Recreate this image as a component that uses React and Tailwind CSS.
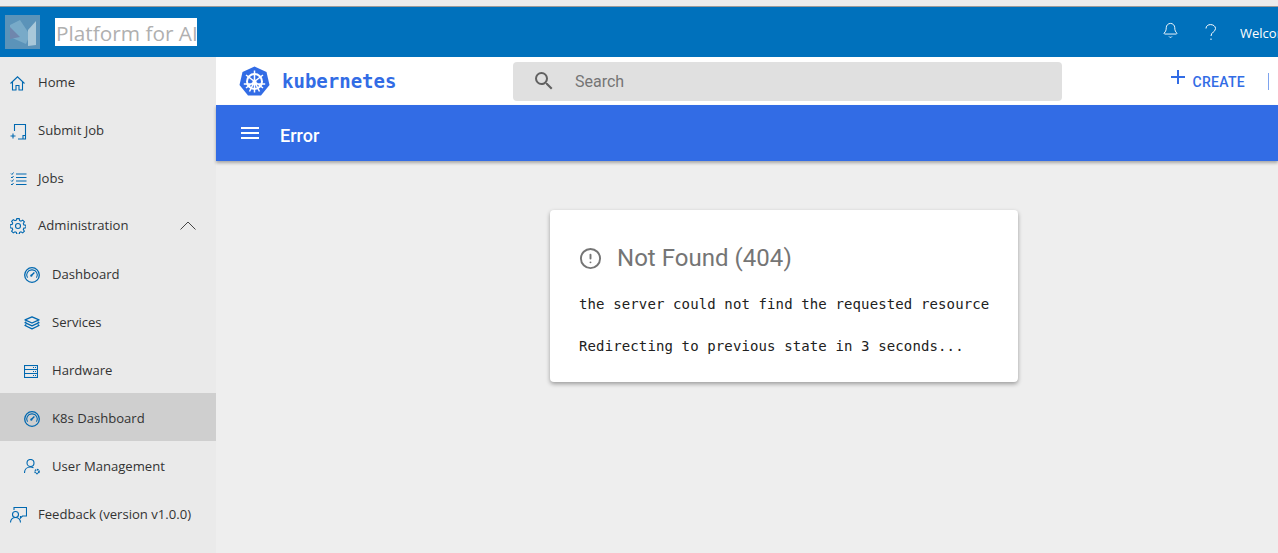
import React from 'react';
import { Bell, AlertCircle } from 'lucide-react';

const GaugeIcon = () => (
  <svg width="16" height="16" viewBox="0 0 16 16" fill="none" stroke="currentColor">
    <circle cx="8" cy="8" r="7.300" strokeWidth="1.300" />
    <path d="M3.500 10.800A5.100 5.100 0 0 1 8 2.900a5.100 5.100 0 0 1 4.500 7.900" strokeWidth="1.100" />
    <path d="M7.400 8.600 10.400 5.600" strokeWidth="1.400" />
    <circle cx="7.300" cy="8.700" r="1.100" fill="currentColor" stroke="none" />
  </svg>
);

const ServicesIcon = () => (
  <svg width="16" height="14" viewBox="0 0 16 14" fill="none" stroke="currentColor" strokeWidth="1.300" strokeLinejoin="round">
    <path d="M8 0.800 15 3.900 8 7 1 3.900Z" />
    <path d="M2.300 5.700 1 6.700 8 9.800 15 6.700 13.700 5.700" />
    <path d="M2.300 8.500 1 9.500 8 12.800 15 9.500 13.700 8.500" />
  </svg>
);

const HomeIcon = () => (
  <svg width="15" height="15" viewBox="0 0 15 15" fill="none" stroke="currentColor" strokeWidth="1.100">
    <path d="M0.500 7.500 7.500 0.800 14.500 7.500" />
    <path d="M2.500 6V14H6V9.500H9V14H12.500V6" />
  </svg>
);

const SubmitIcon = () => (
  <svg width="17" height="17" viewBox="0 0 17 17" fill="none" stroke="currentColor" strokeWidth="1.100">
    <path d="M4.500 8V1.500H15.500V16H8" />
    <path d="M0.500 13H5.500M3 10.500V15.500" />
    <path d="M13 16V12.500h2.500" />
  </svg>
);

const JobsIcon = () => (
  <svg width="17" height="14" viewBox="0 0 17 14" fill="none" stroke="currentColor" strokeWidth="1.200">
    <path d="M6 2H16.500M6 5.500H16.500M6 9H16.500M6 12.500H16.500" />
    <path d="M1 1.500l1 1 1.500-2M1 5l1 1 1.500-2M1 8.500l1 1 1.500-2M1 12l1 1 1.500-2" strokeWidth="1" />
  </svg>
);

const GearIcon = () => (
  <svg width="16" height="16" viewBox="0 0 16 16" fill="none" stroke="currentColor" strokeWidth="1.100">
    <circle cx="8" cy="8" r="2.500" />
    <path d="M6.800 0.600h2.400l.4 2 1.400.6 1.700-1.100 1.700 1.700-1.100 1.700.6 1.400 2 .4v2.400l-2 .4-.6 1.400 1.100 1.700-1.700 1.700-1.700-1.100-1.400.6-.4 2H6.800l-.4-2-1.400-.6-1.700 1.100-1.700-1.700 1.100-1.700-.6-1.400-2-.4V6.800l2-.4.6-1.400-1.100-1.700 1.700-1.700 1.700 1.100 1.400-.6z" />
  </svg>
);

const HardwareIcon = () => (
  <svg width="14" height="13" viewBox="0 0 14 13" fill="none" stroke="currentColor" strokeWidth="1.100">
    <rect x="0.500" y="0.500" width="13" height="12" />
    <path d="M0.500 4.500H13.500M0.500 8.500H13.500" />
    <path d="M9 2.500H12M9 6.500H12M9 10.500H12" strokeDasharray="1 1" />
  </svg>
);

const UserGearIcon = () => (
  <svg width="17" height="16" viewBox="0 0 17 16" fill="none" stroke="currentColor" strokeWidth="1.100">
    <circle cx="6.500" cy="4" r="3.500" />
    <path d="M0.500 14c0-3.500 2.500-6 6-6 1.200 0 2 .3 3 .8" />
    <circle cx="13" cy="12.500" r="2" strokeWidth="1.600" strokeDasharray="1.500 0.600" />
  </svg>
);

const FeedbackIcon = () => (
  <svg width="17" height="16" viewBox="0 0 17 16" fill="none" stroke="currentColor" strokeWidth="1.100">
    <path d="M4 3V0.500H16.500V9H12.500L10.500 11V9" />
    <circle cx="5.500" cy="7.500" r="3" />
    <path d="M0.500 15.500c0-3 2-5 5-5s5 2 5 5" />
  </svg>
);

const LogoIcon = () => (
  <svg width="35" height="34" viewBox="0 0 35 34" className="block">
    <rect width="35" height="34" fill="#5b93b9" />
    <path d="M5 10 15 5 25 20 21 29 5 22Z" fill="#78aac8" />
    <path d="M5 12 15 22 5 24Z" fill="#6f86ad" />
    <path d="M23 15 31 6V30L23 31Z" fill="#a9c8d9" />
  </svg>
);

const K8sLogo = () => (
  <svg width="31" height="31" viewBox="0 0 31 31">
    <path d="M15.500 0.500 27.500 6 30.500 19 22 29.500H9L0.500 19 3.500 6Z" fill="#326ce5" />
    <g stroke="#fff" fill="none">
      <circle cx="15.500" cy="15.500" r="7.500" strokeWidth="2" />
      <path strokeWidth="1.500" d="M15.500 4.500V26.500M7 9 24 22M24 9 7 22M4.800 18 26.200 18M10.500 25.500 15.500 15.500 20.500 25.500" />
      <circle cx="15.500" cy="15.500" r="1.500" fill="#fff" />
    </g>
  </svg>
);

const navItems = [
  { label: 'Home', icon: <HomeIcon /> },
  { label: 'Submit Job', icon: <SubmitIcon /> },
  { label: 'Jobs', icon: <JobsIcon /> },
  { label: 'Administration', icon: <GearIcon />, open: true },
  { label: 'Dashboard', icon: <GaugeIcon />, sub: true },
  { label: 'Services', icon: <ServicesIcon />, sub: true },
  { label: 'Hardware', icon: <HardwareIcon />, sub: true },
  { label: 'K8s Dashboard', icon: <GaugeIcon />, sub: true, active: true },
  { label: 'User Management', icon: <UserGearIcon />, sub: true },
  { label: 'Feedback (version v1.0.0)', icon: <FeedbackIcon /> },
];

const NavRow = ({ item }) => (
  <div
    className={`h-12 flex items-center pr-5 ${item.open ? 'pt-[2px]' : 'pt-1'} ${item.sub ? 'pl-6' : 'pl-2.5'} ${item.active ? 'bg-[#cfcfcf]' : ''}`}
  >
    <span className="w-[28px] shrink-0 flex items-center text-[#0068b0]">{item.icon}</span>
    <span className="flex-1 text-[13.1px] text-[#333333] whitespace-nowrap">{item.label}</span>
    {item.open && (
      <svg width="16" height="9" viewBox="0 0 16 9" fill="none" stroke="#444444" strokeWidth="1" className="-mt-0.5">
        <path d="M0.500 8.500 8 1 15.500 8.500" />
      </svg>
    )}
  </div>
);

export default function App() {
  return (
    <div className="w-[1278px] h-[553px] overflow-hidden flex flex-col bg-[#eeeeee] font-['Open_Sans',sans-serif]">
      <div className="h-[7px] shrink-0 bg-[#ececec] border-b border-[#9a9a9a]" />

      {/* top bar */}
      <div className="h-[50px] shrink-0 bg-[#0071bc] flex items-center pl-[5px]">
        <LogoIcon />
        <span className="ml-[15px] h-7 w-[142px] pt-[3px] pl-px flex items-center bg-white text-[#b0b0b0] text-[20.8px] whitespace-nowrap">
          Platform for AI
        </span>
        <div className="ml-auto flex items-center text-white min-w-0">
          <Bell size={17} strokeWidth={1.3} className="-mt-1" />
          <svg width="12" height="17" viewBox="0 0 12 17" fill="none" stroke="currentColor" strokeWidth="1" className="ml-[26px]">
            <path d="M1 4.500C1 2 3 0.600 5.500 0.600S10.500 2 10.500 4.500C10.500 8 6 8 6 12" />
            <path d="M6 14.500V16" />
          </svg>
          <span className="ml-[23px] w-[38px] pt-1 overflow-hidden text-[13px] whitespace-nowrap">Welcome</span>
        </div>
      </div>

      <div className="flex flex-1 min-h-0">
        <aside className="w-[216px] shrink-0 bg-[#eaeaea]">
          {navItems.map(item => (
            <NavRow key={item.label} item={item} />
          ))}
        </aside>

        <main className="flex-1 min-w-0 flex flex-col font-['Roboto',sans-serif]">
          {/* kubernetes toolbar */}
          <div className="h-12 shrink-0 bg-white flex items-center pl-[23px]">
            <K8sLogo />
            <span className="ml-[12px] w-[114px] text-[19px] font-bold text-[#326ce5] font-['DejaVu_Sans_Mono',monospace]">
              kubernetes
            </span>
            <div className="ml-[117px] w-[549px] h-[39px] rounded-sm bg-[#e0e0e0] flex items-center pl-[19px]">
              <svg width="24" height="24" viewBox="0 0 24 24" fill="#616161">
                <path d="M15.500 14h-.79l-.28-.27A6.471 6.471 0 0 0 16 9.500 6.500 6.500 0 1 0 9.500 16c1.610 0 3.090-.59 4.230-1.570l.27.28v.79l5 4.990L20.490 19l-4.990-5zm-6 0C7.010 14 5 11.990 5 9.500S7.010 5 9.500 5 14 7.010 14 9.500 11.990 14 9.500 14z" />
              </svg>
              <span className="ml-[19px] pt-[2px] text-[16px] text-[#757575]">Search</span>
            </div>
            <div className="ml-auto flex items-center text-[#326ce5] pr-[9px]">
              <svg width="24" height="24" viewBox="0 0 24 24" fill="currentColor" className="-mt-2">
                <path d="M19 13h-6v6h-2v-6H5v-2h6V5h2v6h6v2z" />
              </svg>
              <span className="ml-[2px] pt-[2px] text-[14px] font-medium tracking-[0.3px]">CREATE</span>
              <span className="ml-[23px] w-px h-[17px] bg-[#7ea3ee]" />
            </div>
          </div>

          {/* title bar */}
          <div className="h-14 shrink-0 bg-[#326ce5] flex items-center pl-[22px] text-white shadow-[0_2px_3px_rgba(0,0,0,0.3)]">
            <svg width="24" height="24" viewBox="0 0 24 24" fill="currentColor">
              <path d="M3 18h18v-2H3v2zm0-5h18v-2H3v2zm0-7v2h18V6H3z" />
            </svg>
            <span className="ml-[18px] pt-1 text-[18px] font-medium">Error</span>
          </div>

          {/* error card */}
          <div className="flex-1 pt-[49px] pl-[334px]">
            <div className="w-[468px] h-[172px] bg-white rounded-sm shadow-[0_2px_4px_rgba(0,0,0,0.35)] pl-[29px] pt-[32px]">
              <div className="flex items-center text-[#757575]">
                <AlertCircle size={23} strokeWidth={2} />
                <span className="ml-[15px] text-[24px] tracking-[0.03px] leading-8">Not Found (404)</span>
              </div>
              <p className="mt-[20px] text-[14px] tracking-[0.12px] leading-5 text-[#212121] whitespace-nowrap font-['DejaVu_Sans_Mono',monospace]">
                the server could not find the requested resource
              </p>
              <p className="mt-[22px] text-[14px] tracking-[0.12px] leading-5 text-[#212121] whitespace-nowrap font-['DejaVu_Sans_Mono',monospace]">
                Redirecting to previous state in 3 seconds...
              </p>
            </div>
          </div>
        </main>
      </div>
    </div>
  );
}
